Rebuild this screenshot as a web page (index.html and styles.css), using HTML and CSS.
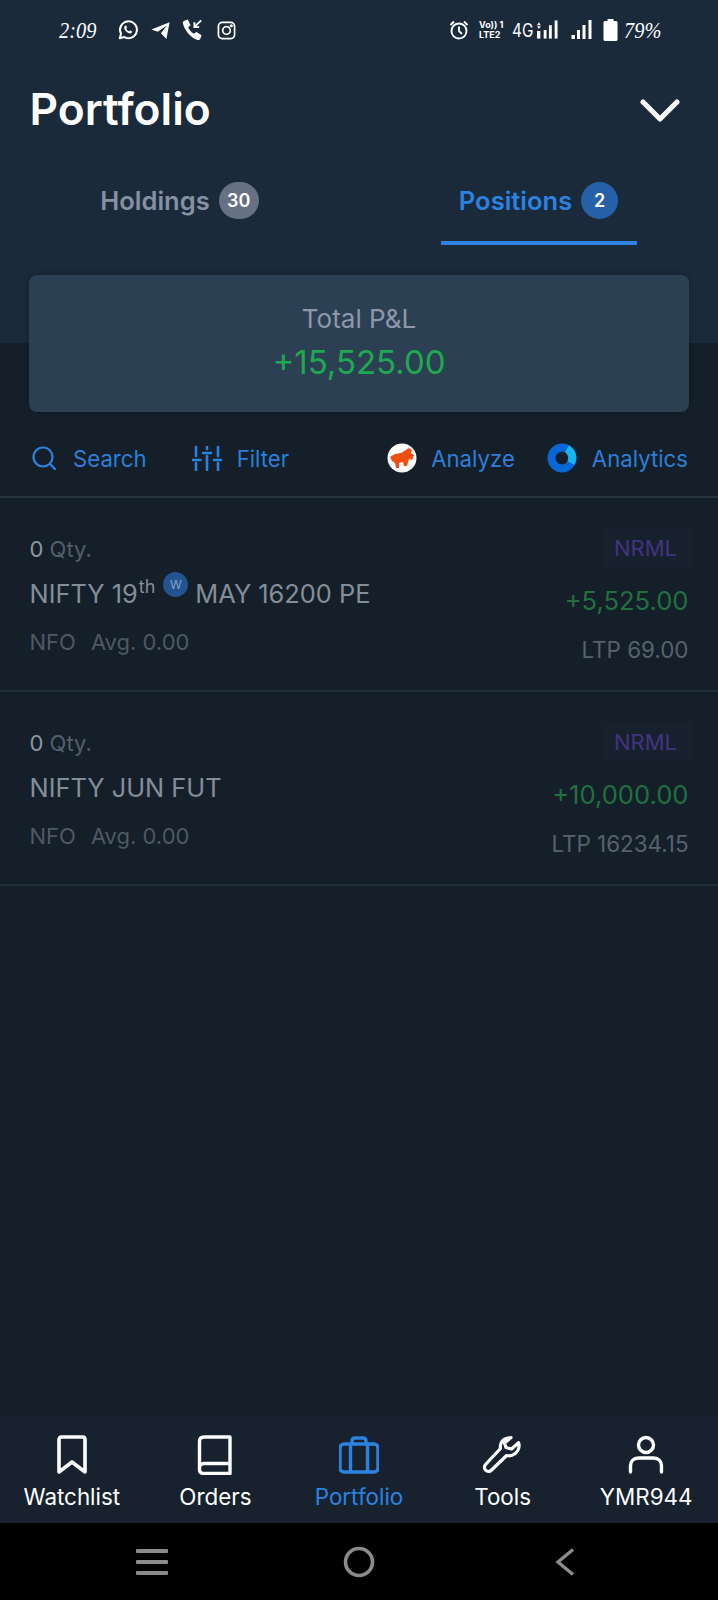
FILE: index.html
```html
<!DOCTYPE html>
<html lang="en">
<head>
<meta charset="utf-8">
<title>Portfolio</title>
<link rel="stylesheet" href="styles.css">
</head>
<body>
<div class="app">
  <div class="status">
    <div class="status-left">
      <span class="clock">2:09</span>
      <svg class="si wa" viewBox="0 0 24 24" fill="none" stroke="#fff" stroke-width="2.2"><path d="M3 21l1.4-5A9.2 9.2 0 1 1 8 19.700z" stroke-linejoin="round"/><path d="M8.500 7.500c-1 1-1 3 .8 5.200 2 2.400 4.500 3.500 6 2.800.8-.4 1.200-1.200 1.200-2l-2.200-1.100-1 1c-1.400-.5-2.600-1.700-3.200-3.100l.9-1-1-2.300z" fill="#fff" stroke="none"/></svg>
      <svg class="si tg" viewBox="0 0 22 22" fill="#fff"><path d="M1 10.500 21 2.500 17.500 21 11.500 14.500 18 6 8 13z"/></svg>
      <svg class="si call" viewBox="0 0 24 24" fill="#fff"><path d="M3 2.500l4-1.500 3 6-2.500 2c.8 2.400 3 5.300 6 7l2.500-2 5.500 3.500-1.500 4c-.5 1-1.500 1.300-2.500 1C10 20 3.500 12.500 2 5c0-1 .3-2 1-2.500z"/><path d="M21 2 14.500 8.500M14 4v5h5" fill="none" stroke="#fff" stroke-width="2"/></svg>
      <svg class="si ig" viewBox="0 0 20 20" fill="none" stroke="#fff" stroke-width="1.800"><rect x="1.500" y="1.500" width="17" height="17" rx="4"/><circle cx="10" cy="10" r="4"/><circle cx="15" cy="5" r=".8" fill="#fff"/></svg>
    </div>
    <div class="status-right">
      <svg class="si alarm" viewBox="0 0 20 20" fill="none" stroke="#fff" stroke-width="1.900"><circle cx="10" cy="11" r="7.500"/><path d="M10 6.500V11l3 3M1.500 5 5 1.500M18.500 5 15 1.500"/></svg>
      <span class="volte"><span>Vo)) 1</span><span>LTE2</span></span>
      <span class="net">4G</span>
      <svg class="si sig1" viewBox="0 0 22 20" fill="#fff"><path d="M2 2 4 5H0zM2 9 0 6h4z"/><rect x="0" y="11" width="3.500" height="8"/><rect x="7" y="10" width="3" height="9"/><rect x="12.500" y="5" width="3" height="14"/><rect x="18.500" y="0" width="3" height="19"/></svg>
      <svg class="si sig2" viewBox="0 0 20 20" fill="#fff"><rect x="0" y="15" width="3.500" height="4"/><rect x="5.500" y="10" width="3" height="9"/><rect x="11" y="5" width="3" height="14"/><rect x="17" y="0" width="3" height="19"/></svg>
      <svg class="si bat" viewBox="0 0 14 22" fill="#fff"><path d="M4 0h6v2h2.500c.8 0 1.500.7 1.500 1.500v17c0 .8-.7 1.500-1.500 1.500h-11C.7 22 0 21.300 0 20.500v-17C0 2.700.7 2 1.500 2H4z"/></svg>
      <span class="clock pct">79%</span>
    </div>
  </div>

  <div class="title-row">
    <h1 class="title">Portfolio</h1>
    <svg class="chev" viewBox="0 0 40 24" fill="none" stroke="#fff" stroke-width="5" stroke-linecap="round" stroke-linejoin="round"><path d="M3 3 20 20 37 3"/></svg>
  </div>

  <div class="tabs">
    <div class="tab"><span class="tab-label">Holdings</span><span class="badge grey">30</span></div>
    <div class="tab active"><span class="tab-label">Positions</span><span class="badge blue">2</span></div>
  </div>

  <div class="card">
    <div class="card-label">Total P&amp;L</div>
    <div class="card-value">+15,525.00</div>
  </div>

  <div class="actions">
    <div class="act-group">
      <div class="act act-search">
        <svg class="act-ic" viewBox="0 0 24 24" fill="none" stroke="#2b82e0" stroke-width="2.200" stroke-linecap="round"><circle cx="11" cy="11" r="9.500"/><path d="M18 18l5 5"/></svg>
        <span>Search</span>
      </div>
      <div class="act act-filter">
        <svg class="act-ic filter-ic" viewBox="0 0 30 26" fill="none" stroke="#2b82e0" stroke-width="2.600" stroke-linecap="round"><path d="M4 2v9M15 2v2M26 2v9M4 18v7M15 11v14M26 18v7M0.500 15h8M11 8h8M22 15h7.500"/></svg>
        <span>Filter</span>
      </div>
    </div>
    <div class="act-group">
      <div class="act act-analyze">
        <svg class="act-ic round" viewBox="0 0 30 30"><circle cx="15" cy="15" r="14.500" fill="#fff"/><path d="M3 14 8 11 14 10 22 5 25 7 24 10 27 12 25 17 22 16 20 23H17L16 19 12 20 12 25H9L8 20 5 18z" fill="#ef4f12"/></svg>
        <span>Analyze</span>
      </div>
      <div class="act act-analytics">
        <svg class="act-ic round" viewBox="0 0 30 30" fill="none" stroke-width="8"><circle cx="15" cy="15" r="10.500" stroke="#0866d6"/><path d="M20 5.800A10.500 10.500 0 0 1 24 20" stroke="#17b5f0"/></svg>
        <span>Analytics</span>
      </div>
    </div>
  </div>

  <div class="list">
    <div class="row">
      <div class="col">
        <div class="qty"><b>0</b> Qty.</div>
        <div class="name">NIFTY 19<sup class="th">th</sup><span class="w">W</span>MAY 16200 PE</div>
        <div class="meta"><span>NFO</span><span>Avg. 0.00</span></div>
      </div>
      <div class="col right">
        <div class="tag">NRML</div>
        <div class="pnl">+5,525.00</div>
        <div class="ltp">LTP 69.00</div>
      </div>
    </div>
    <div class="row">
      <div class="col">
        <div class="qty"><b>0</b> Qty.</div>
        <div class="name">NIFTY JUN FUT</div>
        <div class="meta"><span>NFO</span><span>Avg. 0.00</span></div>
      </div>
      <div class="col right">
        <div class="tag">NRML</div>
        <div class="pnl">+10,000.00</div>
        <div class="ltp">LTP 16234.15</div>
      </div>
    </div>
  </div>

  <nav class="nav">
    <div class="nav-item">
      <svg class="nav-ic" viewBox="0 0 40 40" fill="none" stroke="#fff" stroke-width="3.600" stroke-linejoin="round"><path d="M7 4.500c0-1.500 1-2.500 2.500-2.500h21C32 2 33 3 33 4.500V37L20 27 7 37z"/></svg>
      <span>Watchlist</span>
    </div>
    <div class="nav-item">
      <svg class="nav-ic" viewBox="0 0 40 40" fill="none" stroke="#fff" stroke-width="3.400" stroke-linejoin="round"><path d="M35 2H9C6 2 4.500 4 4.500 6.500v28C4.500 37 6 38.500 9 38.500h26zM4.500 33C4.500 30 6 28.500 9 28.500h26"/></svg>
      <span>Orders</span>
    </div>
    <div class="nav-item on">
      <svg class="nav-ic" viewBox="0 0 40 40" fill="none" stroke="#2b82e0" stroke-width="3.400" stroke-linejoin="round"><rect x="1" y="9" width="38" height="28" rx="4"/><path d="M11.500 9v28M28.500 9v28M13 9V6c0-2 1-3 3-3h8c2 0 3 1 3 3v3"/></svg>
      <span>Portfolio</span>
    </div>
    <div class="nav-item">
      <svg class="nav-ic" viewBox="0 0 40 40" fill="none" stroke="#fff" stroke-width="3.200" stroke-linejoin="round"><path d="M25 3c-5 .5-8.500 5-7.500 10.500L3 29c-2 2.200-2 4.500-.4 6.200 1.800 1.800 4.200 1.600 6-.2l15-14.500c6 1.500 12-3 12.500-9.500 0-1.200-.2-2.300-.6-3.300L28.500 14l-5.500-1.500L21.500 8l6.500-5.400C27 2.700 26 2.900 25 3z"/></svg>
      <span>Tools</span>
    </div>
    <div class="nav-item">
      <svg class="nav-ic" viewBox="0 0 40 40" fill="none" stroke="#fff" stroke-width="3.400" stroke-linecap="round"><circle cx="20" cy="10" r="7.500"/><path d="M4.500 37v-6c0-5 3-8 8-8h15c5 0 8 3 8 8v6"/></svg>
      <span>YMR944</span>
    </div>
  </nav>

  <div class="sysbar">
    <svg class="sys-menu" viewBox="0 0 32 26" fill="#8b8b8b"><rect width="32" height="4" y="0" rx="1"/><rect width="32" height="4" y="11" rx="1"/><rect width="32" height="4" y="22" rx="1"/></svg>
    <svg class="sys-home" viewBox="0 0 32 32" fill="none" stroke="#8b8b8b" stroke-width="3.600"><circle cx="16" cy="16" r="13.500"/></svg>
    <svg class="sys-back" viewBox="0 0 20 28" fill="none" stroke="#8b8b8b" stroke-width="3.400"><path d="M18 1.500 3 14 18 26.500"/></svg>
  </div>
</div>
</body>
</html>
```

FILE: styles.css
```css
* { box-sizing: border-box; }
html, body { margin: 0; padding: 0; background: #141f2a; }
body { font-family: Inter, "Liberation Sans", sans-serif; }
.app {
  width: 718px;
  height: 1600px;
  overflow: hidden;
  display: flex;
  flex-direction: column;
  background: linear-gradient(#1a2a3b 0, #1a2a3b 343px, #141f2a 343px, #141f2a 100%);
  color: #fff;
}
.status {
  height: 60px;
  flex: none;
  display: flex;
  justify-content: space-between;
  align-items: center;
  padding: 0 58px 0 59px;
}
.status-left, .status-right { display: flex; align-items: center; }
.clock {
  display: block;
  width: 38px;
  font-family: "Liberation Serif", serif;
  font-style: italic;
  font-size: 24px;
  line-height: 24px;
  color: #fff;
  white-space: nowrap;
  transform: scaleX(.85);
  transform-origin: left center;
}
.si { display: block; flex: none; }
.wa { width: 22px; height: 22px; margin-left: 20px; }
.tg { width: 21px; height: 20px; margin-left: 11px; }
.call { width: 23px; height: 24px; margin-left: 10px; }
.ig { width: 19px; height: 19px; margin-left: 13px; }
.alarm { width: 20px; height: 20px; }
.volte {
  display: flex;
  flex-direction: column;
  margin-left: 10px;
  font-size: 9px;
  line-height: 10px;
  font-weight: 700;
  width: 24px;
  white-space: nowrap;
}
.net {
  display: block;
  margin-left: 9px;
  width: 19px;
  font-size: 18px;
  white-space: nowrap;
  transform: scaleX(.85);
  transform-origin: left center;
}
.sig1 { width: 21px; height: 20px; margin-left: 6px; }
.sig2 { width: 21px; height: 20px; margin-left: 13px; }
.bat { width: 15px; height: 22px; margin-left: 11px; }
.pct { margin-left: 6px; width: 36px; }

.title-row {
  flex: none;
  height: 92px;
  padding: 6px 38px 0 29.500px;
  display: flex;
  align-items: center;
  justify-content: space-between;
}
.title { margin: 0; font-size: 44.300px; font-weight: 600; line-height: 56px; }
.chev { width: 40px; height: 24px; display: block; margin-top: 4px; }

.tabs { flex: none; display: flex; height: 93px; }
.tab {
  flex: 1;
  position: relative;
  display: flex;
  justify-content: center;
  align-items: center;
  gap: 9px;
  padding-top: 4px;
  font-size: 25.500px;
  font-weight: 600;
  color: #8690a3;
}
.tab.active { color: #2b82e0; }
.tab.active::after {
  content: "";
  position: absolute;
  left: 82px;
  right: 81px;
  bottom: 0;
  height: 4px;
  background: #2b82e0;
}
.badge {
  height: 37px;
  border-radius: 19px;
  display: flex;
  align-items: center;
  justify-content: center;
  font-size: 18px;
  font-weight: 600;
  color: #fff;
}
.badge.grey { width: 40px; background: #687184; }
.badge.blue { width: 37px; background: #2560a8; }

.card {
  flex: none;
  margin: 30px 29px 0;
  height: 137px;
  border-radius: 8px;
  background: #2c4054;
  box-shadow: 0 0 6px rgba(0, 0, 0, .25);
  display: flex;
  flex-direction: column;
  align-items: center;
  padding-top: 29px;
}
.card-label { font-size: 26px; line-height: 30px; color: #8e97ab; }
.card-value { font-size: 33px; line-height: 44px; color: #1ea850; margin-top: 6px; }

.actions {
  flex: none;
  height: 84px;
  padding: 8px 30px 0 32px;
  display: flex;
  align-items: center;
  justify-content: space-between;
  font-size: 22.200px;
  color: #2b7fd8;
}
.act-group { display: flex; align-items: center; }
.act { display: flex; align-items: center; }
.act-search { gap: 17px; }
.act-filter { gap: 15px; margin-left: 45px; }
.act-analyze { gap: 14px; }
.act-analytics { gap: 15px; margin-left: 32px; }
.act-ic { width: 24px; height: 24px; display: block; flex: none; }
.filter-ic { width: 30px; height: 26px; }
.round { width: 30px; height: 30px; }

.list { flex: 1; min-height: 0; border-top: 2px solid #27333f; }
.row {
  height: 194px;
  padding: 20px 29.500px 0;
  border-bottom: 2px solid #222e3a;
  display: flex;
  justify-content: space-between;
  align-items: flex-start;
}
.col { display: flex; flex-direction: column; }
.col.right { align-items: flex-end; }
.qty { font-size: 22px; line-height: 24px; margin-top: 19px; color: #535f6c; }
.qty b { font-weight: 400; color: #8b97a3; }
.name { font-size: 25.400px; line-height: 30px; margin-top: 18px; color: #858e98; display: flex; align-items: flex-start; white-space: nowrap; }
.th { font-size: 18px; line-height: 15px; margin: 0 8px 0 1px; }
.w {
  width: 25px;
  height: 25px;
  border-radius: 50%;
  background: #24548f;
  color: #7ea5d0;
  font-size: 12px;
  display: flex;
  align-items: center;
  justify-content: center;
  margin: -7px 7px 0 0;
}
.meta { display: flex; gap: 15px; font-size: 22px; line-height: 26px; margin-top: 20px; color: #4e5964; }
.tag {
  width: 90px;
  height: 39px;
  margin: 10px -3.500px 0 0;
  padding-left: 12px;
  background: #17212e;
  color: #43337f;
  font-size: 22px;
  display: flex;
  align-items: center;
}
.pnl { font-size: 25.600px; line-height: 32px; margin-top: 18px; color: #22703f; }
.ltp { font-size: 22.400px; line-height: 26px; margin-top: 20px; color: #57626d; }

.nav {
  flex: none;
  height: 107px;
  background: #17222e;
  display: grid;
  grid-template-columns: repeat(5, 1fr);
  padding-top: 19px;
}
.nav-item { display: flex; flex-direction: column; align-items: center; font-size: 22.400px; line-height: 30px; color: #fff; }
.nav-item.on { color: #2b82e0; }
.nav-ic { width: 40px; height: 40px; display: block; margin-bottom: 7px; }

.sysbar {
  flex: none;
  height: 77px;
  background: #000;
  display: grid;
  grid-template-columns: repeat(3, 1fr);
  align-items: center;
  justify-items: center;
}
.sys-menu { width: 32px; height: 26px; margin-left: 65px; }
.sys-home { width: 32px; height: 32px; }
.sys-back { width: 20px; height: 28px; margin-right: 66px; }
```
